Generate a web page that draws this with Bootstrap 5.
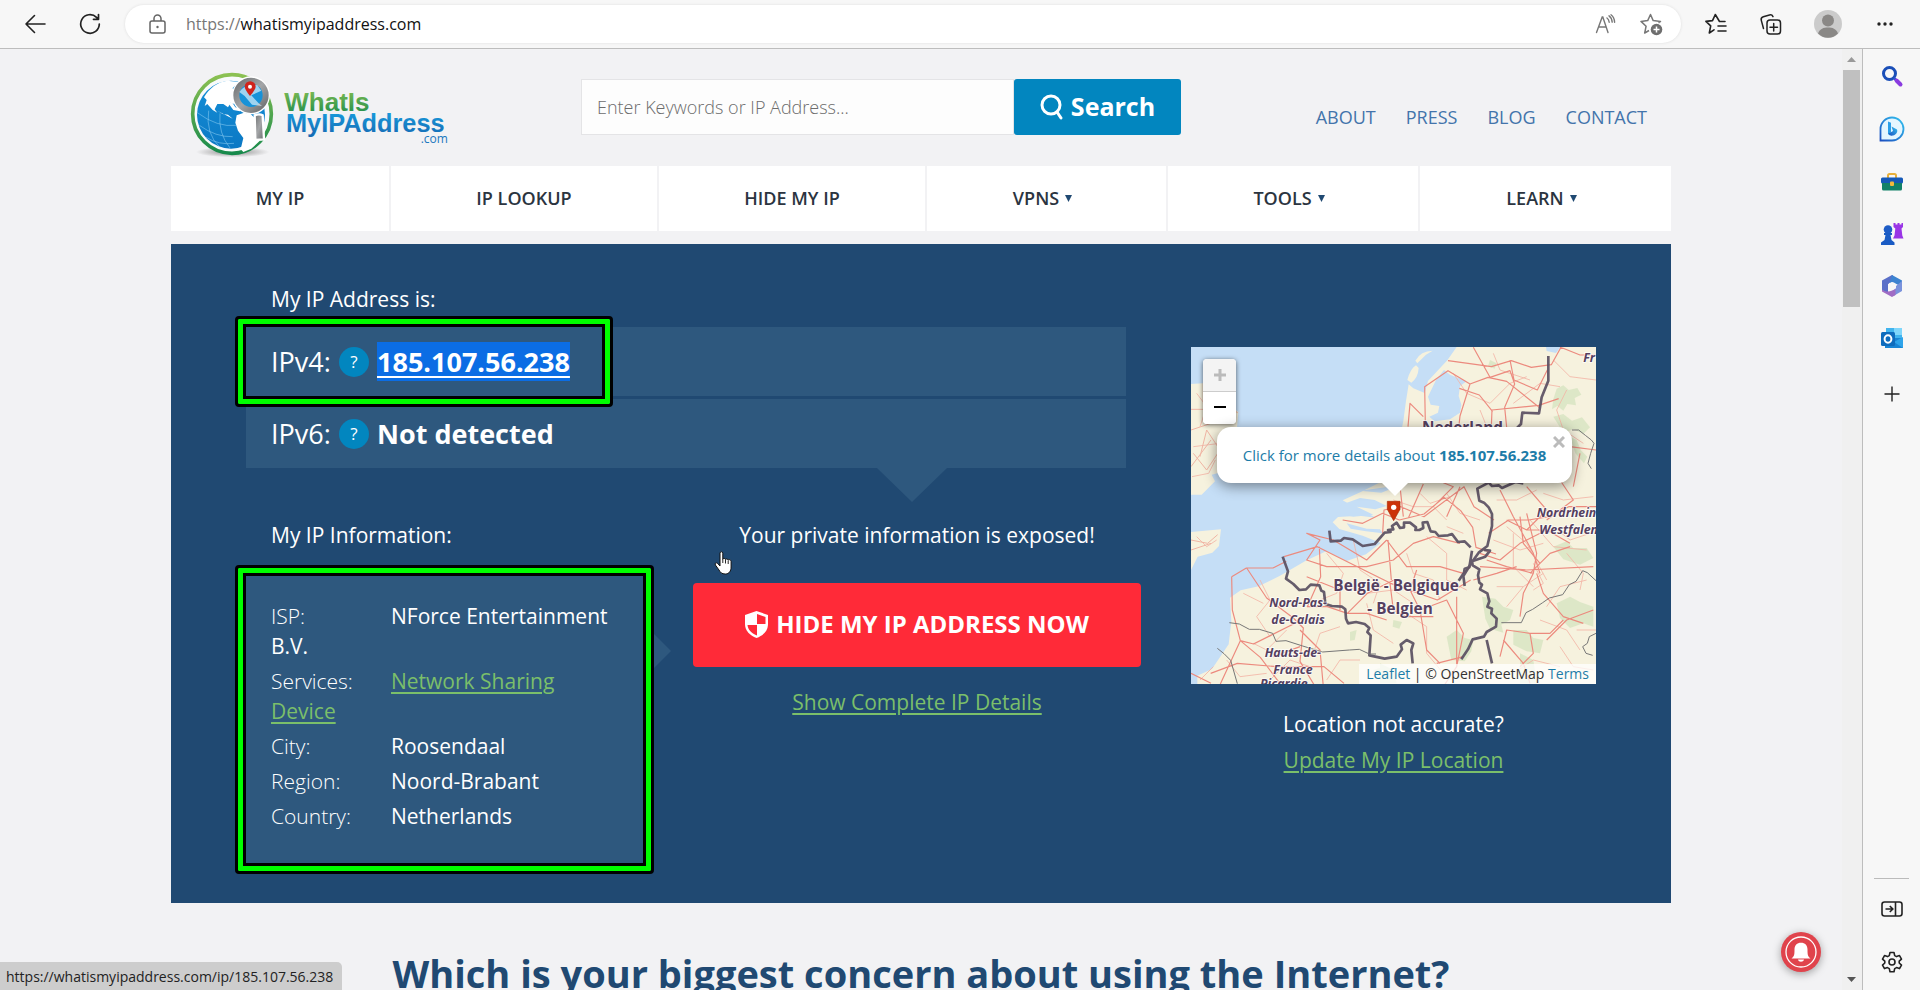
<!DOCTYPE html>
<html lang="en">
<head>
<meta charset="utf-8">
<meta name="viewport" content="width=device-width, initial-scale=1">
<title>What Is My IP Address</title>
<link href="https://cdn.jsdelivr.net/npm/bootstrap@5.3.0/dist/css/bootstrap.min.css" rel="stylesheet">
<style>
  body { font-family: "Open Sans", "Noto Sans", sans-serif; background: #f2f2f4; color: #fff; }
  svg { display: block; flex: none; }
  .app-shell { height: 100vh; overflow: hidden; }
  /* browser toolbar */
  .toolbar { height: 49px; background: #f7f7f7; border-bottom: 1px solid #bdbdbd; padding: 0 24px; }
  .icon-button { border: 0; background: none; padding: 0; color: #222; }
  .reload-button { margin-left: 33px; }
  .omnibox { height: 38px; border-radius: 19px; background: #fff; padding: 0 18px 0 24px; margin: 0 24px; box-shadow: 0 0 3px #ddd; }
  .address-input { border: 0; background: none; font-size: 16px; line-height: 24px; color: #111; }
  .scheme { color: #777; }
  .viewport { overflow: hidden; min-width: 0; }
  .scroll-rail { width: 21px; background: #f0f0f0; border-right: 1px solid #bdbdbd; padding: 0 2px 0 1px; }
  .scroll-thumb { height: 237px; background: #c0c0c0; }
  .sidebar { width: 57px; background: #f7f7f7; }
  .sidebar-list { gap: 28px; padding-top: 15px; }
  .sidebar-rule { width: 35px; height: 1px; background: #bbb; margin-bottom: 18px; }
  .sidebar-foot { gap: 29px; padding-bottom: 16px; }
  /* site header */
  .site { max-width: 1500px; }
  .site-head { height: 117px; padding: 0 24px 0 17px; }
  .brand-link { margin-top: 21px; width: 393px; }
  .search-form { width: 600px; margin-top: 30px; }
  .search-box { height: 56px; font-size: 18px; font-weight: 300; color: #666; background: #fdfdfd; border: 1px solid #e4e4e6; border-radius: 0; padding: 0 15px; }
  .search-box::placeholder { color: #6c6c6c; }
  .search-go { width: 167px; height: 56px; background: #0286bf; border-radius: 3px; color: #fff; font-size: 25px; font-weight: 700; padding: 0; }
  .top-links { gap: 30px; margin-top: 55px; font-size: 18px; line-height: 26px; }
  .top-links a { color: #4374ab; text-decoration: none; }
  .main-menu { display: grid; grid-template-columns: 218fr 266fr 266fr 239fr 250fr 251fr; gap: 2px; }
  .main-menu a { height: 65px; background: #fff; color: #2b3440; font-size: 18px; font-weight: 600; text-decoration: none; }
  .main-menu .has-menu { gap: 6px; padding-right: 8px; }
  /* hero */
  .hero { margin-top: 13px; background: #204972; padding: 40px 75px; font-size: 21px; line-height: 30px; }
  .hero-main { flex: 1 1 895px; min-width: 0; }
  .hero-map { flex: 0 0 405px; padding-top: 63px; }
  .hero-gap { gap: 50px; }
  .hero p { margin: 0; }
  .indent { padding-left: 25px; }
  .ip-rows { margin: 13px 15px 0 0; gap: 3px; }
  .ip-row { height: 69px; background: #2e587e; padding-left: 25px; gap: 8px; font-size: 27px; line-height: 39px; }
  .ip-tag { width: 60px; }
  .help-dot { width: 30px; height: 30px; border: 0; border-radius: 50%; background: #0286bf; color: #fff; font-size: 17px; line-height: 30px; padding: 0; }
  .picked { background: #0b6de4; color: #fff; text-decoration: underline; text-decoration-thickness: 2px; text-underline-offset: 4px; }
  .frame { position: absolute; inset: -11px; border: 3px solid #000; border-radius: 4px; box-shadow: inset 0 0 0 5px #0f0, inset 0 0 0 8px #000; pointer-events: none; }
  .frame-ip { right: auto; width: 378px; }
  .drop-arrow { position: absolute; left: 631px; top: 100%; }
  .details { margin-top: 52px; }
  .info-col { flex: 0 0 397px; }
  .info-box { margin-top: 26px; padding: 25px 35px 32px 25px; background: #2e587e; gap: 5px; }
  .info-label { display: inline-block; width: 120px; font-weight: 300; }
  .side-arrow { position: absolute; left: 100%; top: 47px; }
  .green-link { color: #7bbf6a; text-decoration: underline; text-decoration-thickness: 2px; text-underline-offset: 3px; }
  .hide-btn { width: 100%; height: 84px; margin: 33px 0 20px; background: #ff2a38; color: #fff; border-radius: 4px; font-size: 24px; font-weight: 700; padding: 0 0 2px; }
  .hide-btn, .search-go { border: 0; }
  .hand { position: absolute; left: 21px; top: 31px; z-index: 2; }
  /* map widget */
  .map-frame { height: 337px; margin-bottom: 25px; overflow: hidden; }
  .zoom-ctl { position: absolute; left: 12px; top: 12px; width: 33px; border-radius: 4px; background: #fff; box-shadow: 0 1px 5px rgba(0,0,0,.6); overflow: hidden; }
  .zoom-ctl button { display: flex; align-items: center; justify-content: center; width: 100%; height: 32px; border: 0; background: #fff; }
  .zoom-ctl button:first-child { background: #f4f4f4; border-bottom: 1px solid #ccc; height: 33px; }
  .map-popup { position: absolute; left: 26px; top: 80px; width: 355px; height: 56px; border-radius: 14px; background: #fff; box-shadow: 0 3px 14px rgba(0,0,0,.45); font-size: 15px; line-height: 24px; }
  .map-popup a, .map-credit a { color: #1d7ca8; text-decoration: none; }
  .popup-close { position: absolute; right: 7px; top: 9px; }
  .popup-tip { position: absolute; left: 165px; top: 100%; }
  .map-credit { position: absolute; right: 0; bottom: 0; height: 20px; padding: 0 7px; background: rgba(255,255,255,.75); color: #333; font-size: 14px; line-height: 20px; white-space: nowrap; }
  .hero .update-row { margin-top: 6px; }
  .big-question { margin: 42px 0 0; text-align: center; color: #204972; font-size: 38px; line-height: 56px; font-weight: 700; white-space: nowrap; }
  .status-tip { position: absolute; left: 0; bottom: 0; height: 28px; padding: 0 9px 0 6px; background: #cdcdcd; color: #222; border-top-right-radius: 5px; font-size: 14px; line-height: 29px; }
  .bell-btn { position: absolute; right: 21px; bottom: 18px; width: 40px; height: 40px; border: 0; padding: 0; border-radius: 50%; background: #e0434c; box-shadow: 0 2px 8px rgba(0,0,0,.35); }
</style>
</head>
<body>
<div class="app-shell d-flex flex-column">
  <header class="toolbar d-flex align-items-center flex-shrink-0">
    <button class="icon-button" aria-label="Back"><svg width="22" height="22" viewBox="0 0 22 22" fill="none" stroke="#222" stroke-width="1.6" stroke-linecap="round" stroke-linejoin="round"><path d="M21 11H2M10.500 2.500 2 11l8.500 8.500"/></svg></button>
    <button class="icon-button reload-button" aria-label="Reload"><svg width="22" height="22" viewBox="0 0 22 22" fill="none" stroke="#222" stroke-width="1.7" stroke-linecap="round" stroke-linejoin="round"><path d="M20.300 11A9.300 9.300 0 1 1 17.500 4.300L19.300 6M19.500 1.500V6.300H14.500"/></svg></button>
    <div class="omnibox d-flex align-items-center flex-fill">
      <svg width="17" height="20" viewBox="0 0 17 20" fill="none" stroke="#666" stroke-width="1.500"><rect x="1" y="7" width="15" height="12" rx="2"/><path d="M5 7V4.500a3.500 3.500 0 0 1 7 0V7"/><circle cx="8.500" cy="13" r="1.200" fill="#666" stroke="none"/></svg>
      <a class="address-input text-decoration-none flex-fill ps-3 ms-1" href="https://whatismyipaddress.com"><span class="scheme">https://</span>whatismyipaddress.com</a>
      <button class="icon-button me-4" aria-label="Read aloud"><svg width="21" height="20" viewBox="0 0 21 20" fill="none" stroke="#777" stroke-width="1.400" stroke-linecap="round"><path d="M1.500 18.500 7.200 3h.6l5.200 15.500M3.800 13h7.300M12 4c1.400.9 2 2.300 2.200 4.300M14 1.800c2.200 1.500 3 3.400 3.200 6.300M16 .8c2.400 1.700 3.400 4 3.600 7.500"/></svg></button>
      <button class="icon-button" aria-label="Add to favourites"><svg width="23" height="23" viewBox="0 0 23 23"><path d="M9 17.500 4.700 20l1.400-6.800L1 8.400l6.700-.8L10.500 1.500 13.200 7.600 20.500 8.400 18.500 10" fill="none" stroke="#777" stroke-width="1.500" stroke-linejoin="round"/><circle cx="16.500" cy="16.500" r="5.800" fill="#6e6e6e"/><path d="M16.500 13.500v6M13.500 16.500h6" stroke="#fff" stroke-width="1.500"/></svg></button>
    </div>
    <button class="icon-button" aria-label="Favourites"><svg width="22" height="22" viewBox="0 0 22 22" fill="none" stroke="#222" stroke-width="1.600" stroke-linejoin="round" stroke-linecap="round"><path d="M20 8.500h-5.500L10.300 1.500 7.500 7.600.9 8.400l4.800 4.500L4.300 20l4.700-3.200M13 13h8M13 18h8"/></svg></button>
    <button class="icon-button ms-4 ps-2" aria-label="Collections"><svg width="23" height="23" viewBox="0 0 23 23" fill="none" stroke="#222" stroke-width="1.500" stroke-linecap="round"><rect x="8" y="7" width="13.500" height="14" rx="3"/><path d="M14.700 10.500v7.500M11 14.200h7.500M4.500 15.500 2.300 7.400a3 3 0 0 1 2-3.700L10.500 2a3 3 0 0 1 3.500 1.600"/></svg></button>
    <button class="icon-button ms-4 ps-2" aria-label="Profile"><svg width="28" height="28" viewBox="0 0 28 28"><circle cx="14" cy="14" r="14" fill="#cbcbcb"/><circle cx="14" cy="10.500" r="6" fill="#8a8886"/><path d="M4 23.500c2-5 5.500-6 10-6s8 1 10 6A14 14 0 0 1 4 23.500z" fill="#8a8886"/></svg></button>
    <button class="icon-button ms-4 ps-2" aria-label="More"><svg width="22" height="22" viewBox="0 0 22 22" fill="#222"><circle cx="5" cy="11" r="1.700"/><circle cx="11" cy="11" r="1.700"/><circle cx="17" cy="11" r="1.700"/></svg></button>
  </header>

  <div class="d-flex flex-fill overflow-hidden">
    <main class="viewport flex-fill position-relative">
      <div class="site mx-auto">
        <div class="site-head d-flex align-items-start">
          <a class="brand-link flex-shrink-0" href="#" aria-label="WhatIsMyIPAddress.com">
            <svg width="260" height="88" viewBox="24 30 780 264">
              <defs>
                <linearGradient id="gGreen" x1="0" y1="0" x2="0" y2="1"><stop offset="0" stop-color="#8cc152"/><stop offset="1" stop-color="#178a4c"/></linearGradient>
                <linearGradient id="gBlue" x1="0" y1="0" x2="0" y2="1"><stop offset="0" stop-color="#17a0e0"/><stop offset="1" stop-color="#1668b2"/></linearGradient>
                <linearGradient id="gSea" x1="0" y1="0" x2="0" y2="1"><stop offset="0" stop-color="#1590d8"/><stop offset="1" stop-color="#0b78c4"/></linearGradient>
                <linearGradient id="gSteel" x1="0" y1="0" x2="1" y2="1"><stop offset="0" stop-color="#6f7173"/><stop offset=".5" stop-color="#a4a6a8"/><stop offset="1" stop-color="#6a6c6e"/></linearGradient>
                <radialGradient id="gShade"><stop offset="0" stop-color="#888"/><stop offset="1" stop-color="#888" stop-opacity="0"/></radialGradient>
              </defs>
              <ellipse cx="158" cy="276" rx="110" ry="16" fill="url(#gShade)"/>
              <circle cx="156" cy="162" r="118" fill="#f8fafb" stroke="url(#gGreen)" stroke-width="11"/>
              <circle cx="153" cy="164" r="102" fill="url(#gSea)"/>
              <path d="M72 112 C88 84 112 66 142 62 L176 66 L158 84 L164 104 L172 120 L160 132 L152 128 L144 142 L130 132 L112 132 L104 148 L112 158 L98 150 L82 132 L74 138 L80 120z" fill="#fff"/>
              <path d="M112 152l16 10 16 2 14 12M142 126l16 4 8 12 18 4-4 8-20-4z" fill="#fff"/>
              <path d="M170 166l22-8 20 4 16 16 20-4 0 30-10 40-24 22-24 10-8-8 8-34-16-22-8-24z" fill="#fff"/>
              <g fill="none" stroke="#8fd0f4" stroke-width="2" opacity=".8"><path d="M52 158q60 45 118 38M58 196q50 36 100 34M86 152q-10 70 34 110M120 160q-6 60 30 104M78 232q40 24 84 18"/></g>
              <path d="M224 166q14-6 24 0l4 72-26 2z" fill="url(#gSteel)" stroke="#fff" stroke-width="7"/>
              <circle cx="213" cy="106" r="57" fill="#fff"/>
              <circle cx="213" cy="106" r="44" fill="#1792d8" stroke="url(#gSteel)" stroke-width="18"/>
              <path d="M178 96q20-28 54-20l12 16-30 14 22 24 10 8-30-4-22-26z" fill="#d9f0fb" opacity=".7"/>
              <path d="M210 108 Q194 88 194 80 a16 16 0 0 1 33 0 Q227 88 210 108z" fill="#d0241c"/><circle cx="210" cy="80" r="6" fill="#fff"/>
              <g font-family="Liberation Sans, Arial, sans-serif" font-weight="700">
                <text x="313" y="152" font-size="78" fill="url(#gGreen)">WhatIs</text>
                <text x="318" y="217" font-size="76" fill="url(#gBlue)">MyIPAddress</text>
              </g>
              <text x="722" y="248" font-size="36" font-family="Open Sans, sans-serif" fill="#1b78be">.com</text>
            </svg>
          </a>
          <form class="search-form d-flex flex-shrink-0" onsubmit="return false">
            <input class="search-box form-control" type="text" aria-label="Search" placeholder="Enter Keywords or IP Address...">
            <button class="search-go d-flex align-items-center justify-content-center flex-shrink-0 gap-2" type="submit">
              <svg width="23" height="26" viewBox="0 0 23 26" fill="none" stroke="#fff" stroke-width="3" stroke-linecap="round"><circle cx="11" cy="11" r="9"/><path d="M17 18l4 6"/></svg>Search</button>
          </form>
          <nav class="top-links d-flex ms-auto"><a href="#">ABOUT</a><a href="#">PRESS</a><a href="#">BLOG</a><a href="#">CONTACT</a></nav>
        </div>
        <nav class="main-menu">
          <a class="d-flex align-items-center justify-content-center" href="#">MY IP</a>
          <a class="d-flex align-items-center justify-content-center" href="#">IP LOOKUP</a>
          <a class="d-flex align-items-center justify-content-center" href="#">HIDE MY IP</a>
          <a class="has-menu d-flex align-items-center justify-content-center" href="#">VPNS <svg width="7" height="7" viewBox="0 0 7 7"><path d="M0 0h7L3.500 7z" fill="#204972"/></svg></a>
          <a class="has-menu d-flex align-items-center justify-content-center" href="#">TOOLS <svg width="7" height="7" viewBox="0 0 7 7"><path d="M0 0h7L3.500 7z" fill="#204972"/></svg></a>
          <a class="has-menu d-flex align-items-center justify-content-center" href="#">LEARN <svg width="7" height="7" viewBox="0 0 7 7"><path d="M0 0h7L3.500 7z" fill="#204972"/></svg></a>
        </nav>

        <section class="hero d-flex hero-gap">
          <div class="hero-main">
            <p class="indent">My IP Address is:</p>
            <div class="ip-rows d-flex flex-column position-relative">
              <div class="ip-row d-flex align-items-center position-relative">
                <span class="ip-tag">IPv4:</span><button class="help-dot" aria-label="About IPv4">?</button><a class="picked fw-bold" href="#">185.107.56.238</a>
                <span class="frame frame-ip"></span>
              </div>
              <div class="ip-row d-flex align-items-center">
                <span class="ip-tag">IPv6:</span><button class="help-dot" aria-label="About IPv6">?</button><strong>Not detected</strong>
              </div>
              <svg class="drop-arrow" width="70" height="34" viewBox="0 0 70 34"><path d="M0 0h70L35 34z" fill="#2e587e"/></svg>
            </div>
            <div class="details d-flex hero-gap">
              <div class="info-col">
                <p class="indent">My IP Information:</p>
                <div class="info-box d-flex flex-column position-relative">
                  <p><span class="info-label">ISP:</span>NForce Entertainment B.V.</p>
                  <p><span class="info-label">Services:</span><a class="green-link" href="#">Network Sharing Device</a></p>
                  <p><span class="info-label">City:</span>Roosendaal</p>
                  <p><span class="info-label">Region:</span>Noord-Brabant</p>
                  <p><span class="info-label">Country:</span>Netherlands</p>
                  <svg class="side-arrow" width="28" height="56" viewBox="0 0 28 56"><path d="M0 0v56l28-28z" fill="#2e587e"/></svg>
                  <span class="frame"></span>
                </div>
              </div>
              <div class="flex-fill text-center position-relative">
                <p>Your private information is exposed!</p>
                <svg class="hand" width="20" height="25" viewBox="0 0 20 25"><path d="M6 2.200c0-1.900 2.800-1.900 2.800 0v6c.5-1.200 2.500-1 2.700.4.600-1 2.300-.8 2.600.5.700-.9 3-.6 3 1.400v5.500c0 4-2 7-5.600 7-4 0-5-1.500-6.500-4L1.400 14c-1-1.700 1-2.900 2.200-1.600L6 15z" fill="#fff" stroke="#111" stroke-width="1"/><path d="M8.800 8v4M11.500 9v3.500M14.200 9.500V13" stroke="#111" stroke-width=".9"/></svg>
                <button class="hide-btn d-flex align-items-center justify-content-center gap-2"><svg width="23" height="27" viewBox="0 0 23 27"><path d="M11.500 0 23 4v9c0 7-5 11.500-11.500 14C5 24.500 0 20 0 13V4z" fill="#fff"/><path d="M12 3l8.500 3v7H12zM2.500 14H12v10.500C6 22 3 18.500 2.500 14z" fill="#ff2a38"/></svg>HIDE MY IP ADDRESS NOW</button>
                <a class="green-link" href="#">Show Complete IP Details</a>
              </div>
            </div>
          </div>

          <div class="hero-map text-center">
            <div class="map-frame position-relative">
              <svg class="w-100 h-100" viewBox="93 81 1215 1011" preserveAspectRatio="xMidYMid slice">
                <rect x="93" y="81" width="1215" height="1011" fill="#c5def6"/>
                <g fill="#f6f2de">
                  <path d="M1308 81H890l-28 40-58 62-10 36-34-14-14-12-8 50-8 60-8 40-18 80-40 62-60 30-56 26 40 22 60 30-50-6-64 4-16 16 20 20 70 20 54 22-44 34-58 20-60-30-60 28-80 46-64 32-54 12-32 22 4 70-8 70-50 74-44 20v67h1215z"/>
                  <path d="M742 180q10-36 26-44l8 8q-2 30-22 44zM766 122q16-30 52-30l-20 12-26 26z"/>
                  <path d="M93 192l36-2 36 30 70 56-10 120-40 60-30 8 10 20-40 40-32 0zM93 636l90-8-6 50-20 20-44 12-20 40z"/>
                </g>
                <g fill="#c5def6">
                  <path d="M852 150l-24 30-24 50 8 24 26 4-4 20-26 12 16 14 46-6 30-20 4-24-8-26 4-30 20-14-50-20z"/>
                  <path d="M540 556l60-22 44 6 36 18-34 10-56-8 50 24-60 6-50-10zM560 610l60 16 40 2 8 12-50-6-46-8zM600 512l60-8 60-8-56 22zM1158 81h44l-14 18-28-6z"/>
                </g>
                <g fill="#d3e3bd" opacity=".7">
                  <path d="M1190 206l20-10 16 14 26-6 12 20-20 10 4 22-26-4-12 20-18-14-16 10 4-30zM1180 290l30-8 26 20 30-10 24 30-20 20-30-14-30 10zM1230 350l20 10 12 30 20 20-10 20-26-30zM966 830l40 6 24 24 30 10-10 30-26 14 6 24-40-12-14-30zM860 950l30-20 24 24 26 6-6 34-20 30-40-4-6-30zM1190 850l40-20 30 16 40 14v60l-30-10-40 14-30-30zM1180 680l40-16 20 20 40 0 20 30-40 20-50-16zM1060 930l40 0 20 24 30 6-10 40-40-6-40-20zM570 936l20-6-6 30-14 2zM780 350l40 10-10 40zM1080 1000l40 20 10 70h-50zM660 1030l40 20 10 40h-50zM990 120l20 10-6 16-20-8zM640 1050l20-6 8 20-20 4zM700 900l26 6-8 20-20-6z"/>
                </g>
                <g fill="none" stroke="#f3b5a6" stroke-width="2.500" stroke-linejoin="round">
                  <path d="M880 160l40 60 70 30 60-60 50-20M1000 100l20 50 90 30M1060 250l80-60 60 10M960 270l20 50M820 340l40-20 60 0M1180 120l50 50 78 10M1220 210l-30 60 20 60 60 40"/>
                  <path d="M500 700l50 60-20 60-50 20M580 660l20 90 60 40-20 60M740 700l20 60 60 20 20 60M800 650l60 50 0 80 60 30M560 800l60 20 80-10 60 40M620 850l20 80 60 40M740 880l60 40 0 80 50 60M860 620l50 20M700 540l60 20 60 0 40 40M860 520l40 60 60 20M780 520l30 30 60-20"/>
                  <path d="M300 780l30 60-40 50 40 60M250 820l60 30M380 930l-60 60-40-20M460 1000l20-60 60-20M200 1020l40 50 80-10M330 1080l60-60 60 20M500 1080l40-60 60 0M120 1080l40-40"/>
                  <path d="M1000 660l80 30 70-20M1040 620l60 50 60 110M1060 640l0 100 60 60M1110 600l70 80 100 10M1180 620l50 40 60-20M1010 800l80 0 60-40M1040 860l50-60M1160 860l40-60 80-20M1140 900l80 30 40 60M1060 1060l60-40 80 20M1200 980l40 60 60 10M1250 930l58 0M1010 540l60 0 60-30M1150 520l60 20 90-10M1120 730l30 60-30 20M1220 700l50 60-10 50"/>
                  <path d="M110 220l30 40-20 60M100 380l80-10 40-40M96 470l50-10 20-40M110 650l30 30 30-20"/>
                </g>
                <g fill="none" stroke="#ec8a7e" stroke-width="3.500" stroke-linejoin="round">
                  <path d="M864 122l60 8 70 10 60-18 60 20 60-8 30-54M796 310l-2-110 70-48 66 40 54-20 56 12 100 80M930 192l-30 96-4 36M940 82l50 90 60-20 14 40-30 70 6 60M994 320l2-50 140-14 60-20M744 320l6-70 40 40M1050 120l12 60 70 30 30-60M1200 81l60 24 48 0M898 205l60 20 40 50"/>
                  <path d="M548 600l60 10 60-30 50 20 74-18 60-50 50 40 36 50 10 60 60 20M668 640l4-70 50-10 70 30 120-90 30 60 60 40M720 500l10 90M790 492l-44 100M820 560l60-60-50-20M900 500l-40 90M680 660l60 80 100 0 70 20 20-20M680 660l-60 60-100-60-80-20 40 20-40 60 60 20 120 0 80-20 60-50 60-20 80 20M684 660l10 120M478 680l4 90-40 90 60 0 60 20 60-60 80-40M372 710l100-30 120 60 100 50 140 50 100-60M440 770l100 40 0 60M690 790l10 80 40 20 80 0M560 880l60 0 60 20M770 750l-20 60 30 60 20 120 40 40M780 870l80-30 50 100-20 100-60 90M890 830l0 210"/>
                  <path d="M215 770l44-26 80 0 40-20M215 770l2 100 24 92 40 10 100-50 40-20M260 744l60 90 80 60 30 30-10 100 60 100 0 68M241 962l-60 130M241 962l60 50 60 80M280 972l140-70M93 1060l60 30M152 1060l80-30 120 10 140 0 60 50M420 930l60 60 10 110M340 1010l80-30"/>
                  <path d="M986 640l60-40 60 0 60-10 60-30 83 0M1020 510l40 80 60 110 20 60M1040 600l60 30 60 0 70 40M1080 590l10 80 50 60M1100 580l30 120-10 60M960 700l60 20 60-50 80-40M1100 500l60 70-60 60M960 740l140 10 200-10M1110 760l60-60 60-20M1130 760l20 60 60 70 60 20M980 720l60 20 80 20-30 60-10 70M940 780l70-20 60-20M1210 900l-40 40-60 0-70-10-20 80M1300 870l-80 30-60 60M1110 940l10 60-40 40M1200 480l40 60-80 60M1230 380l78 10M1240 500l20-100M1030 960l60 70 20 60M830 1030l80-20"/>
                </g>
                <g fill="none" stroke="#f0b5a4" stroke-width="3"><path d="M93 268h40l30-30 70 40M93 330l60-20 60-20M100 400l40 50 40-60-40-60-20 80M93 440l60-80M130 190v60l50 60M93 660l50 10 30-26M93 690l60-20"/></g>
                <g fill="none" stroke="#5b5163" stroke-width="8" stroke-linejoin="round" opacity=".93">
                  <path d="M1165 108v74l-20 50-8 48-50-2-4 34-40 40M1090 490l-24-4-40 18-10-8-20 2-10-10-34 18 6 36 14 6 14 14 10 20 0 36-14 60-26 20-20 28-26 42 4 30"/>
                  <path d="M508 632l4 32 30-2 10-8 26 4 30 20 36-6 30-34 18-2-8-6 16-2-4-10 14-10 10 16 12-2 0-14 18 0 18 14-2 8 12 0 12-6-2-16 14-2 10 28 14 2 10 12 28-2 12-4 18 24 20-2 18 18M936 692l-8 50-14 4-2 12-16 24M972 690l18 2-14 18-40 14 2 12 20 12-4 18 4 22 8 6-6 14 22 12 6 24-6 16 14 6-2 14 16 16-2 24-28 16-8 14-34 8-14 30-20 30M980 960l16 70M368 710l16 44-6 22 22 16 18 18 20-2 14-14 26 2 6 16 8 4 4 36 20 6 30 2 10 8 2 28 6 14 24-4 26 6 14 12-6 12 10 10-4 60 46 10 36-6 16-22-4-14 18-14 20 10-6 20 4 40"/>
                </g>
                <g fill="none" stroke="#777" stroke-width="3"><path d="M208 908l30 4 30 16 30 0 40 12 10 24 30-2 50 16 60 18 80-6 30-2 30 14 20 0M172 985l20 16 20 20 20 70M1024 908l60 0 14-30 20-10 30-20 20-14 40-10 20-30 20-10 20-32 14 6 26 24M1236 330l20 0 20 16 18 14 8 10-10 30-8 30 10 16M1308 940l-20 10-6 20-14 10 10 20 20 6"/></g>
                <g font-family="Open Sans, Noto Sans, sans-serif" font-weight="700" fill="#55405f" stroke="#fff" stroke-opacity=".8" stroke-width="5" paint-order="stroke">
                  <g font-size="46"><text x="786" y="338">Nederland</text><text x="520" y="813">België - Belgique</text><text x="622" y="882">- Belgien</text></g>
                  <g font-size="37" font-style="italic"><text x="1270" y="125">Fr</text><text x="1130" y="591">Nordrhein-</text><text x="1138" y="642">Westfalen</text><text x="328" y="861">Nord-Pas-</text><text x="334" y="912">de-Calais</text><text x="314" y="1010">Hauts-de-</text><text x="340" y="1061">France</text><text x="300" y="1104">Picardie</text></g>
                </g>
                <path d="M682 544h38v24l-19 34-19-34z" fill="#cc3208" stroke="#aa2a06" stroke-width="2"/><circle cx="701" cy="562" r="8" fill="#fff"/>
              </svg>
              <div class="zoom-ctl">
                <button aria-label="Zoom in" disabled><svg width="14" height="14" viewBox="0 0 14 14" stroke="#bbb" stroke-width="3"><path d="M7 1v12M1 7h12"/></svg></button>
                <button aria-label="Zoom out"><svg width="14" height="14" viewBox="0 0 14 14" stroke="#000" stroke-width="2"><path d="M1 6h12"/></svg></button>
              </div>
              <div class="map-popup d-flex align-items-center justify-content-center">
                <a href="#">Click for more details about <b>185.107.56.238</b></a>
                <button class="icon-button popup-close" aria-label="Close"><svg width="12" height="12" viewBox="0 0 12 12" stroke="#bbb" stroke-width="3"><path d="M1 1l10 10M11 1 1 11"/></svg></button>
                <svg class="popup-tip" width="26" height="13" viewBox="0 0 26 13"><path d="M0 0h26L13 13z" fill="#fff"/></svg>
              </div>
              <div class="map-credit"><a href="#">Leaflet</a> | © OpenStreetMap <a href="#">Terms</a></div>
            </div>
            <p>Location not accurate?</p>
            <p class="update-row"><a class="green-link" href="#">Update My IP Location</a></p>
          </div>
        </section>
        <h2 class="big-question">Which is your biggest concern about using the Internet?</h2>
      </div>
      <div class="status-tip">https://whatismyipaddress.com/ip/185.107.56.238</div>
      <button class="bell-btn" aria-label="Notifications"><svg width="40" height="40" viewBox="0 0 40 40"><circle cx="20" cy="20" r="15" fill="none" stroke="#fff" stroke-width="1.300"/><path d="M10.500 26.500c2.500-2 3-3 3-9 0-4 2.500-6.700 6.500-6.700s6.500 2.700 6.500 6.700c0 6 .5 7 3 9zM17 27.500h6c-.5 3-5.500 3-6 0z" fill="#fff"/></svg></button>
    </main>
    <div class="scroll-rail d-flex flex-column flex-shrink-0" aria-hidden="true">
      <svg class="mx-auto my-2" width="9" height="5" viewBox="0 0 9 5"><path d="M0 5h9L4.500 0z" fill="#999"/></svg>
      <div class="scroll-thumb"></div>
      <svg class="mx-auto mt-auto mb-2" width="9" height="5" viewBox="0 0 9 5"><path d="M0 0h9L4.500 5z" fill="#555"/></svg>
    </div>
    <aside class="sidebar d-flex flex-column align-items-center flex-shrink-0">
      <div class="sidebar-list d-flex flex-column align-items-center">
        <button class="icon-button" aria-label="Search"><svg width="24" height="24" viewBox="0 0 24 24" fill="none"><circle cx="9.500" cy="9.500" r="6" stroke="#1b4fb8" stroke-width="3"/><path d="M14 14l3 3" stroke="#2f57d0" stroke-width="2.500"/><path d="M16.500 16.500l4 4" stroke="#8a3be0" stroke-width="4" stroke-linecap="round"/></svg></button>
        <button class="icon-button" aria-label="Bing"><svg width="26" height="26" viewBox="0 0 26 26"><defs><linearGradient id="gBing" x1="0" y1="1" x2="1" y2="0"><stop offset="0" stop-color="#1b4fc0"/><stop offset="1" stop-color="#34c3f0"/></linearGradient></defs><path d="M1.500 24.500V13a11.500 11.500 0 1 1 11.500 11.500z" fill="#e4f6ff" stroke="url(#gBing)" stroke-width="1.800"/><path d="M9 5.500l3 1.300v9l-1 3.700-2-1.500z" fill="#2a9fe8"/><path d="M12.500 10.500l5.500 3c1.500 3.500-3 7-6.500 6L9.200 17.800 14 15z" fill="url(#gBing)"/></svg></button>
        <button class="icon-button" aria-label="Tools"><svg width="24" height="24" viewBox="0 0 24 24"><path d="M8 8V5.500A1.500 1.500 0 0 1 9.500 4h5A1.500 1.500 0 0 1 16 5.500V8" fill="none" stroke="#e8b03a" stroke-width="2"/><rect x="1" y="7.500" width="22" height="6" rx="1.500" fill="#1559b8"/><path d="M2 13h20v6a1.500 1.500 0 0 1-1.500 1.500h-17A1.500 1.500 0 0 1 2 19z" fill="#128168"/><rect x="10" y="11.500" width="4" height="4.500" rx="1" fill="#f2b93c"/></svg></button>
        <button class="icon-button" aria-label="Games"><svg width="24" height="24" viewBox="0 0 24 24"><path d="M13.500 1h2v1.500h2V1h2v1.500h2V1H23v4l-1.500 1.500.8 7 1.200 3H13l1.500-3 .8-7L13.500 5z" fill="#9a35e6"/><circle cx="8" cy="7.500" r="4.300" fill="#1d5cc6"/><path d="M4 11h8v2h-1.500l1 5 3 2.500V23H1v-2.500L4.500 18l1-5H4z" fill="#1a5bc4"/></svg></button>
        <button class="icon-button" aria-label="Microsoft 365"><svg width="24" height="24" viewBox="0 0 24 24"><path d="M12 1 2 6.500v9.500l6 3.500V12c0-2 1-3 3-4l2-1V1.500z" fill="#5a6fc8"/><path d="M12 1l10 5.500V13l-6.500-3.500C13.500 8 12 8 9.500 9z" fill="#3d83d0"/><path d="M22 7v10l-8.500 5-1.500-5.500c2.500-1 4-2 4-4.500z" fill="#7a92dc"/><path d="M2 15.500C5 18 9 18 12 16.500l3.500-1.500V21L12 23 2 17.500z" fill="#a06cc4"/><path d="M12 8l4 2.300v4L12 16.500 8 14.300v-4z" fill="#f7f7f7"/></svg></button>
        <button class="icon-button" aria-label="Outlook"><svg width="24" height="24" viewBox="0 0 24 24"><rect x="6" y="2" width="16" height="14" fill="#41b4ee"/><rect x="14" y="2" width="8" height="7" fill="#7fd6fb"/><path d="M5 12h18v10H5z" fill="#1884d4"/><path d="M23 11v11l-9-6z" fill="#2fa4ea"/><rect x="1" y="6" width="14" height="14" rx="1.500" fill="#0f6cbd"/><ellipse cx="8" cy="13" rx="3.400" ry="3.800" fill="none" stroke="#fff" stroke-width="2"/></svg></button>
        <button class="icon-button mt-1" aria-label="Add"><svg width="24" height="24" viewBox="0 0 24 24" stroke="#222" stroke-width="1.400"><path d="M12 4.500v15M4.500 12h15"/></svg></button>
      </div>
      <div class="sidebar-foot d-flex flex-column align-items-center mt-auto">
        <div class="d-flex flex-column align-items-center"><span class="sidebar-rule"></span>
        <button class="icon-button" aria-label="Hide sidebar"><svg width="24" height="24" viewBox="0 0 24 24" fill="none" stroke="#222" stroke-width="1.600"><rect x="2" y="5" width="20" height="14" rx="2.500"/><path d="M15.500 5v14M5.500 12h7M9.800 9l3 3-3 3"/></svg></button></div>
        <button class="icon-button" aria-label="Settings"><svg width="24" height="24" viewBox="0 0 24 24" fill="none" stroke="#222" stroke-width="1.600" stroke-linejoin="round"><path d="M10 2.500h4l.7 3.100 1.800 1 3-1 2 3.500-2.300 2.100v1.800l2.300 2.100-2 3.500-3-1-1.800 1-.7 3.100h-4l-.7-3.100-1.800-1-3 1-2-3.500 2.300-2.100v-1.800L2.500 9.100l2-3.500 3 1 1.800-1z"/><circle cx="12" cy="12" r="3"/></svg></button>
      </div>
    </aside>
  </div>
</div>
<script src="https://cdn.jsdelivr.net/npm/bootstrap@5.3.0/dist/js/bootstrap.bundle.min.js"></script>
</body>
</html>
